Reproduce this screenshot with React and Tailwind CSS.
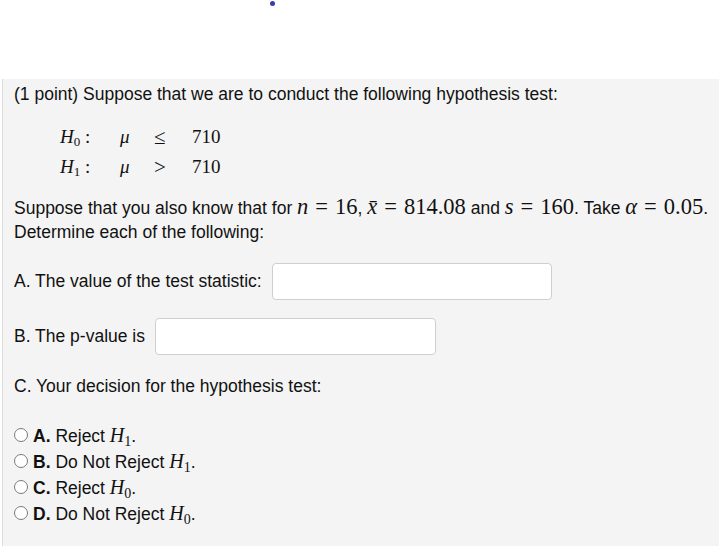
import React from "react"

const M = ({ children, className = "" }) => (
    <span className={`font-['Liberation_Serif',serif] text-[22.5px] leading-[20px] ${className}`}>{children}</span>
)

const Eq = () => <span className="mx-[7px]">=</span>

const Hsub = ({ n }) => (
    <span className="font-['Liberation_Serif',serif] text-[20px]">
        <i>H</i>
        <sub className="text-[14px] not-italic">{n}</sub>
    </span>
)

const options = [
    { key: "A.", label: "Reject", n: 1 },
    { key: "B.", label: "Do Not Reject", n: 1 },
    { key: "C.", label: "Reject", n: 0 },
    { key: "D.", label: "Do Not Reject", n: 0 }
]

const App = () => {
    return (
        <div className="w-[719px] h-[546px] bg-white overflow-hidden font-['Liberation_Sans',Arial,sans-serif] text-[17.5px] text-[#111]">
            {/* top strip */}
            <div className="h-[79px] relative">
                <span className="absolute left-[270px] top-[1px] w-[5px] h-[5px] rounded-full bg-[#3b3bb0]"></span>
            </div>

            {/* problem panel */}
            <div className="ml-[2px] h-[467px] bg-[#f4f4f4] border-l border-[#dcdcdc] pl-[11px] pt-[3px]">
                <p className="leading-[24px]">(1 point) Suppose that we are to conduct the following hypothesis test:</p>

                <div className="mt-[16px] ml-[46px] grid grid-cols-[60px_34px_38px_40px] leading-[30px] text-[19px] font-['Liberation_Serif',serif]">
                    <span><i>H</i><sub className="text-[13px]">0</sub> :</span>
                    <span className="italic">μ</span>
                    <span className="text-[21px]">≤</span>
                    <span>710</span>
                    <span><i>H</i><sub className="text-[13px]">1</sub> :</span>
                    <span className="italic">μ</span>
                    <span className="text-[21px]">&gt;</span>
                    <span>710</span>
                </div>

                <p className="mt-[14px] leading-[24px]">
                    Suppose that you also know that for <M><i>n</i><Eq />16</M>, <M><i>x̄</i><Eq />814.08</M> and <M><i>s</i><Eq />160</M>. Take <M><i>α</i><Eq />0.05</M>.
                    <br />
                    Determine each of the following:
                </p>

                <div className="mt-[19px] flex items-center gap-[10px]">
                    <span>A. The value of the test statistic:</span>
                    <input className="w-[280px] h-[37px] bg-white border border-[#cfcfcf] rounded-[4px]" />
                </div>

                <div className="mt-[18px] flex items-center gap-[10px]">
                    <span>B. The p-value is</span>
                    <input className="w-[281px] h-[37px] bg-white border border-[#cfcfcf] rounded-[4px]" />
                </div>

                <p className="mt-[19px] leading-[24px]">C. Your decision for the hypothesis test:</p>

                <div className="mt-[24px] flex flex-col">
                    {options.map((o) => (
                        <label key={o.key} className="flex items-center h-[26px] gap-[5px]">
                            <span className="w-[14px] h-[14px] rounded-full border border-[#7a7a7a] bg-white"></span>
                            <span>
                                <b>{o.key}</b> {o.label} <Hsub n={o.n} />.
                            </span>
                        </label>
                    ))}
                </div>
            </div>
        </div>
    )
}

export default App
